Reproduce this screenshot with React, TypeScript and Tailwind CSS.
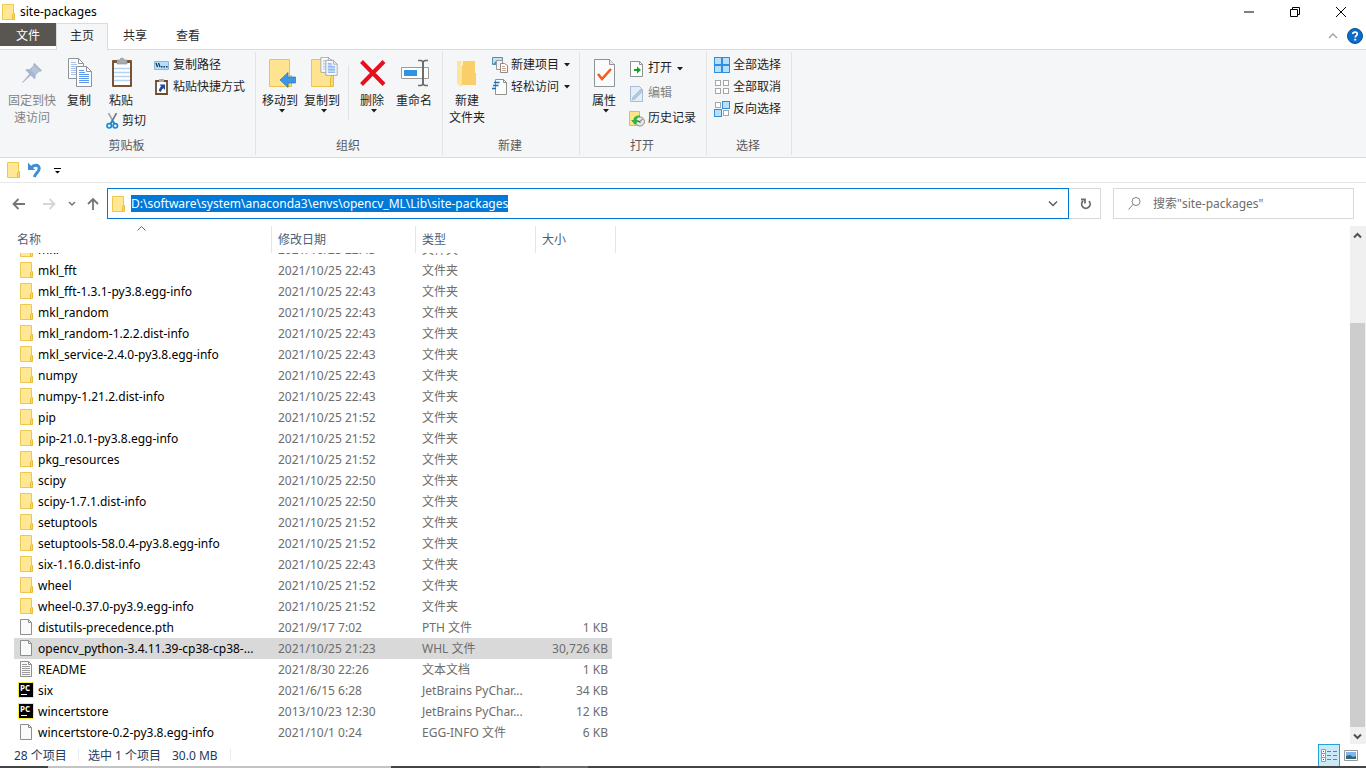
import React, { useEffect, useRef } from "react";

type FileRow = {
  name: string;
  date: string;
  type: string;
  size?: string;
  icon?: "folder" | "file" | "text" | "pycharm";
  selected?: boolean;
};

const FILES: FileRow[] = [
  { name: "mkl", date: "2021/10/25 22:43", type: "文件夹" },
  { name: "mkl_fft", date: "2021/10/25 22:43", type: "文件夹" },
  { name: "mkl_fft-1.3.1-py3.8.egg-info", date: "2021/10/25 22:43", type: "文件夹" },
  { name: "mkl_random", date: "2021/10/25 22:43", type: "文件夹" },
  { name: "mkl_random-1.2.2.dist-info", date: "2021/10/25 22:43", type: "文件夹" },
  { name: "mkl_service-2.4.0-py3.8.egg-info", date: "2021/10/25 22:43", type: "文件夹" },
  { name: "numpy", date: "2021/10/25 22:43", type: "文件夹" },
  { name: "numpy-1.21.2.dist-info", date: "2021/10/25 22:43", type: "文件夹" },
  { name: "pip", date: "2021/10/25 21:52", type: "文件夹" },
  { name: "pip-21.0.1-py3.8.egg-info", date: "2021/10/25 21:52", type: "文件夹" },
  { name: "pkg_resources", date: "2021/10/25 21:52", type: "文件夹" },
  { name: "scipy", date: "2021/10/25 22:50", type: "文件夹" },
  { name: "scipy-1.7.1.dist-info", date: "2021/10/25 22:50", type: "文件夹" },
  { name: "setuptools", date: "2021/10/25 21:52", type: "文件夹" },
  { name: "setuptools-58.0.4-py3.8.egg-info", date: "2021/10/25 21:52", type: "文件夹" },
  { name: "six-1.16.0.dist-info", date: "2021/10/25 22:43", type: "文件夹" },
  { name: "wheel", date: "2021/10/25 21:52", type: "文件夹" },
  { name: "wheel-0.37.0-py3.9.egg-info", date: "2021/10/25 21:52", type: "文件夹" },
  { name: "distutils-precedence.pth", date: "2021/9/17 7:02", type: "PTH 文件", size: "1 KB", icon: "file" },
  {
    name: "opencv_python-3.4.11.39-cp38-cp38-...",
    date: "2021/10/25 21:23",
    type: "WHL 文件",
    size: "30,726 KB",
    icon: "file",
    selected: true,
  },
  { name: "README", date: "2021/8/30 22:26", type: "文本文档", size: "1 KB", icon: "text" },
  { name: "six", date: "2021/6/15 6:28", type: "JetBrains PyChar...", size: "34 KB", icon: "pycharm" },
  { name: "wincertstore", date: "2013/10/23 12:30", type: "JetBrains PyChar...", size: "12 KB", icon: "pycharm" },
  { name: "wincertstore-0.2-py3.8.egg-info", date: "2021/10/1 0:24", type: "EGG-INFO 文件", size: "6 KB", icon: "file" },
];

/* ---------- small icons (16px) ---------- */

function FolderIcon() {
  return (
    <svg width="16" height="16" viewBox="0 0 16 16" className="shrink-0">
      <path d="M2.5.5h11v15h-11z" fill="#ffe794" stroke="#ecc850" />
      <path d="M12.5 10.500l1-1h1v6h-2z" fill="#fdd868" stroke="#e8bd3c" />
    </svg>
  );
}

function FileIcon({ lines = false }: { lines?: boolean }) {
  return (
    <svg width="16" height="16" viewBox="0 0 16 16" className="shrink-0">
      <path d="M2.500.5h8l3 3v12h-11z" fill="#f9fbfb" stroke="#8e8e8e" />
      <path d="M10.500.5v3h3" fill="none" stroke="#8e8e8e" />
      {lines && <path d="M4 3.500h5M4 5.500h8M4 7.500h8M4 9.500h8M4 11.500h8M4 13.500h8" stroke="#9a9a9a" />}
    </svg>
  );
}

function PyCharmIcon() {
  return (
    <svg width="16" height="16" viewBox="0 0 16 16" className="shrink-0">
      <path d="M0 0h16v16H0z" fill="#f6f03a" />
      <path d="M1 1h14v14H1z" fill="#000" />
      <text x="2" y="9" fontSize="8" fontWeight="700" fontFamily="Open Sans, sans-serif" fill="#fff">
        PC
      </text>
      <path d="M3 12h6v1H3z" fill="#fff" />
    </svg>
  );
}

function CutIcon() {
  return (
    <svg width="13" height="16" viewBox="0 0 13 16" className="shrink-0">
      <path d="M2.500 0 8.500 11" stroke="#a4a9ae" strokeWidth="1.700" fill="none" />
      <path d="M10.500 0 4.500 11" stroke="#757b82" strokeWidth="1.700" fill="none" />
      <path d="M4.500 10.500 6.500 8l2 2.500" stroke="#1a8ad0" strokeWidth="1.600" fill="none" />
      <circle cx="3.200" cy="12.800" r="2.200" fill="none" stroke="#1a8ad0" strokeWidth="1.700" />
      <circle cx="9.300" cy="12.800" r="2.200" fill="none" stroke="#1a8ad0" strokeWidth="1.700" />
    </svg>
  );
}

function CopyPathIcon() {
  return (
    <svg width="16" height="16" viewBox="0 0 16 16" className="shrink-0">
      <path d="M.5 4.500h14v8H.5z" fill="#b5dcfa" stroke="#86b9e0" />
      <path d="m2 6 1.500 4M4.500 6l1.500 4" stroke="#17375e" strokeWidth="1.300" />
      <path d="M7 9h1.500v1.500H7zM9.500 9H11v1.500H9.500zM12 9h1.500v1.500H12z" fill="#17375e" />
    </svg>
  );
}

function PasteShortcutIcon() {
  return (
    <svg width="16" height="16" viewBox="0 0 16 16" className="shrink-0">
      <path d="M2 2h11v13H2z" fill="#fff" stroke="#6b4a2f" strokeWidth="1.800" />
      <path d="M5 0h5v3H5z" fill="#a9a9a9" />
      <path d="M5.500 5.500H11V11L9.300 9.300C8 10.300 7.300 11.500 7 13L4.800 12c.2-1.800 1-3.300 2.300-4.700z" fill="#1f4f9c" />
    </svg>
  );
}

function NewItemIcon() {
  return (
    <svg width="16" height="16" viewBox="0 0 16 16" className="shrink-0">
      <path d="M.5 .5h10v7H.5z" fill="#bfe3f5" stroke="#5a8fa8" />
      <path d="m1 7 3-3 2 2 2-1 2 2z" fill="#4c91bd" />
      <path d="M4.500 3.500h6v9h-6z" fill="#f3f3f3" stroke="#9a9a9a" />
      <path d="M8.500 6.500h4l3 2v7h-7z" fill="#fff" stroke="#8b8b8b" />
      <path d="M10 9.500h3M10 11.500h4M10 13.500h4" stroke="#d7a58a" />
    </svg>
  );
}

function EasyAccessIcon() {
  return (
    <svg width="16" height="16" viewBox="0 0 16 16" className="shrink-0">
      <path d="M3.500.5h8l3 3v12h-11z" fill="#fbfcfc" stroke="#919191" />
      <path d="M11.500.5v3h3" fill="none" stroke="#919191" />
      <path d="M2 3.500h5.500M1 6.500h5.500M0 9.500h4" stroke="#1b6fb8" strokeWidth="1.400" />
    </svg>
  );
}

function OpenIcon() {
  return (
    <svg width="16" height="16" viewBox="0 0 16 16" className="shrink-0">
      <path d="M1.500.5h9l3 3v12h-12z" fill="#fbfcfc" stroke="#919191" />
      <path d="M10.500.5v3h3" fill="none" stroke="#919191" />
      <path d="M5 8h3V5.500L12 9l-4 3.500V10H5z" fill="#16a02c" />
    </svg>
  );
}

function EditIcon() {
  return (
    <svg width="16" height="16" viewBox="0 0 16 16" className="shrink-0">
      <path d="M1.500.5h9l3 3v12h-12z" fill="#e4edf8" stroke="#a9bcd4" />
      <path d="m3 14 1-3 8-8 2 2-8 8z" fill="#b3c7e0" stroke="#9db3cf" strokeWidth=".6" />
    </svg>
  );
}

function HistoryIcon() {
  return (
    <svg width="16" height="16" viewBox="0 0 16 16" className="shrink-0">
      <path d="M.5.5h10v14H.5z" fill="#ffe48b" stroke="#e4bc45" />
      <circle cx="11" cy="10.500" r="4.500" fill="#e7e7e7" stroke="#8c8c8c" />
      <path d="M11 10.500 13.500 8M11 10.500V12M11 10.500H9" stroke="#555" />
      <path d="M11 4.500C6.500 4.200 4.500 6.500 4.500 9H2l4 5 4-5H7.500c0-1.800 1-3 3.500-3.200z" fill="#2fb344" />
    </svg>
  );
}

function SelectIcon({ on }: { on: boolean[] }) {
  const cells = [
    [0, 0],
    [8, 0],
    [0, 8],
    [8, 8],
  ];
  return (
    <svg width="16" height="16" viewBox="0 0 16 16" className="shrink-0">
      {cells.map(([x, y], i) =>
        on[i] ? (
          <rect key={i} x={x + 0.5} y={y + 0.5} width="7" height="7" fill="#b9e0fb" stroke="#2f8fdd" />
        ) : (
          <rect key={i} x={x + 1.5} y={y + 1.5} width="5" height="5" fill="#fff" stroke="#a6a6a6" />
        )
      )}
    </svg>
  );
}

/* ---------- large icons (32px) ---------- */

function PinIcon() {
  return (
    <svg width="32" height="32" viewBox="0 0 32 32">
      <path
        d="M18.500 6 26 13.500l-1.500 1.300-1.300-.4-3.700 3.700c.5 1.600.2 3.200-.8 4.200l-3.900-3.900L6.500 26 6 25.500l7.300-8.500-4-4c1-1 2.800-1.300 4.300-.8l4-3.700-.5-1.300z"
        fill="#a5b6ce"
      />
      <path d="m18.700 9 4.300 4.300-4 4-4.300-4.300z" fill="#b7c5d9" />
    </svg>
  );
}

function Pages({ ink = "#86b2f0" }: { ink?: string }) {
  return (
    <>
      <path d="M.5.5h10l5 5v15H.5z" fill="#fbfcfd" stroke="#8f9499" />
      <path d="M10.500.5v5h5" fill="none" stroke="#8f9499" />
      <path d="M3 4.500h5M3 6.500h6M3 8.500h10M3 10.500h10M3 12.500h10M3 14.500h10M3 16.500h10" stroke={ink} />
    </>
  );
}

function CopyIcon() {
  return (
    <svg width="32" height="32" viewBox="0 0 32 32">
      <g transform="translate(5 1)">
        <Pages ink="#a9c6ee" />
      </g>
      <g transform="translate(13 9)">
        <Pages ink="#5c96ee" />
      </g>
    </svg>
  );
}

function PasteIcon() {
  return (
    <svg width="32" height="32" viewBox="0 0 32 32">
      <rect x="7" y="3" width="20" height="27" rx="1" fill="#7a5335" />
      <path d="M9 6h16v22H9z" fill="#fff" />
      <path d="M9 11.500h16M9 15.500h16M9 19.500h16M9 23.500h16" stroke="#b5d4ef" strokeWidth="1.500" />
      <path d="M12 3h3a2 2 0 0 1 4 0h3v4H12z" fill="#a8abae" stroke="#898c90" strokeWidth=".6" />
    </svg>
  );
}

function BigFolder() {
  return (
    <>
      <path d="M5.500 2.500h20v27h-20z" fill="#ffe391" stroke="#eac650" />
      <path d="M24.500 20.500l2-2h1v11h-3z" fill="#fbd76c" stroke="#e5bc40" />
    </>
  );
}

function MoveToIcon() {
  return (
    <svg width="32" height="32" viewBox="0 0 32 32">
      <BigFolder />
      <path d="m16 23 8-7.500V20h7.500v6H24v4.500z" fill="#3b97e3" stroke="#2479c2" strokeWidth=".7" />
    </svg>
  );
}

function CopyToIcon() {
  return (
    <svg width="32" height="32" viewBox="0 0 32 32">
      <BigFolder />
      <g transform="translate(14.500 0) scale(.75)">
        <Pages ink="#a9c6ee" />
      </g>
      <g transform="translate(19.500 3) scale(.75)">
        <Pages ink="#5c96ee" />
      </g>
    </svg>
  );
}

function DeleteIcon() {
  return (
    <svg width="32" height="32" viewBox="0 0 32 32">
      <path d="M5.500 4.500 28 27.500M28 4.500 5.500 27.500" stroke="#e60f1c" strokeWidth="4" />
    </svg>
  );
}

function RenameIcon() {
  return (
    <svg width="32" height="32" viewBox="0 0 32 32">
      <path d="M3.500 10.500h27v11h-27z" fill="#fff" stroke="#9a9a9a" />
      <path d="M6 13h13v6H6z" fill="#2f93e3" />
      <path d="M25 4v24" stroke="#6d6d6d" strokeWidth="2" />
      <path d="M20 3.500h3l2 1 2-1h3M20 28.500h3l2-1 2 1h3" fill="none" stroke="#6d6d6d" strokeWidth="1.600" />
    </svg>
  );
}

function NewFolderIcon() {
  return (
    <svg width="32" height="32" viewBox="0 0 32 32">
      <path d="M11 4h13v12h1v12H11z" fill="#f8cf6b" />
      <path d="M6 4h6v3l-1 1v22L6 27z" fill="#ffe59b" />
      <path d="M11 4h1v4l-3 2z" fill="#fff3cc" />
    </svg>
  );
}

function PropertiesIcon() {
  return (
    <svg width="32" height="32" viewBox="0 0 32 32">
      <path d="M6.500 2.500h15l5 5v22h-20z" fill="#fafbfc" stroke="#8e9196" />
      <path d="M21.500 2.500v5h5" fill="#e7e9ec" stroke="#8e9196" />
      <path d="m10 17 4 5 9-10" fill="none" stroke="#f0601c" strokeWidth="2.600" />
    </svg>
  );
}

function Caret() {
  return (
    <svg width="6" height="4" viewBox="0 0 6 4" className="shrink-0">
      <path d="M0 0h6L3 3.500z" fill="#1e1e1e" />
    </svg>
  );
}

/* ---------- ribbon pieces ---------- */

type BigButtonProps = {
  icon: React.ReactNode;
  lines: string[];
  wide?: boolean;
  caret?: boolean;
  disabled?: boolean;
};

function BigButton({ icon, lines, wide, caret, disabled }: BigButtonProps) {
  return (
    <button
      disabled={disabled}
      className={`flex flex-col items-center pt-[7px] ${wide ? "w-[52px]" : "w-[42px]"} ${
        disabled ? "text-[#838383]" : ""
      }`}
    >
      {icon}
      <span className="mt-[3px] flex flex-col whitespace-nowrap leading-[17px]">
        {lines.map((line) => (
          <span key={line}>{line}</span>
        ))}
      </span>
      {caret && (
        <span className="pl-1">
          <Caret />
        </span>
      )}
    </button>
  );
}

type SmallButtonProps = {
  icon: React.ReactNode;
  label: string;
  caret?: boolean;
  disabled?: boolean;
  tall?: boolean;
};

function SmallButton({ icon, label, caret, disabled, tall }: SmallButtonProps) {
  return (
    <button
      disabled={disabled}
      className={`flex items-center gap-[3px] whitespace-nowrap ${tall ? "h-[25px]" : "h-[22px]"} ${
        disabled ? "text-[#838383]" : ""
      }`}
    >
      {icon}
      <span className="mr-[2px] pb-[2px]">{label}</span>
      {caret && <Caret />}
    </button>
  );
}

function RibbonGroup({ label, width, children }: { label: string; width: string; children: React.ReactNode }) {
  return (
    <section aria-label={label} className={`my-[2px] flex flex-col border-r border-[#e2e3e4] ${width}`}>
      <div className="-mt-[2px] flex flex-1">{children}</div>
      <div className="pb-px pr-[2px] text-center leading-[17px] text-[#5a5a5a]">{label}</div>
    </section>
  );
}

function Ribbon() {
  return (
    <div className="flex h-[108px] shrink-0 border-b border-[#dadbdc] bg-[#f5f6f7] text-[#1e1e1e]">
      <RibbonGroup label="剪贴板" width="w-[256px]">
        <div className="flex items-start pl-[6px]">
          <BigButton wide disabled icon={<PinIcon />} lines={["固定到快", "速访问"]} />
          <BigButton icon={<CopyIcon />} lines={["复制"]} />
          <div className="w-[54px]">
            <BigButton icon={<PasteIcon />} lines={["粘贴"]} />
            <div className="pl-[6px] pt-px">
              <SmallButton icon={<CutIcon />} label="剪切" />
            </div>
          </div>
          <div className="flex flex-col pt-1">
            <SmallButton icon={<CopyPathIcon />} label="复制路径" />
            <SmallButton icon={<PasteShortcutIcon />} label="粘贴快捷方式" />
          </div>
        </div>
      </RibbonGroup>

      <RibbonGroup label="组织" width="w-[187px]">
        <div className="flex items-start pl-[3px]">
          <BigButton caret icon={<MoveToIcon />} lines={["移动到"]} />
          <BigButton caret icon={<CopyToIcon />} lines={["复制到"]} />
          <div className="ml-[5px] mr-[2px] mt-[15px] h-[55px] w-px bg-[#e2e3e4]" />
          <BigButton caret icon={<DeleteIcon />} lines={["删除"]} />
          <BigButton icon={<RenameIcon />} lines={["重命名"]} />
        </div>
      </RibbonGroup>

      <RibbonGroup label="新建" width="w-[137px]">
        <div className="flex items-start pl-[3px]">
          <BigButton icon={<NewFolderIcon />} lines={["新建", "文件夹"]} />
          <div className="ml-1 flex flex-col pt-1">
            <SmallButton caret icon={<NewItemIcon />} label="新建项目" />
            <SmallButton caret icon={<EasyAccessIcon />} label="轻松访问" />
          </div>
        </div>
      </RibbonGroup>

      <RibbonGroup label="打开" width="w-[127px]">
        <div className="flex items-start pl-[3px]">
          <BigButton caret icon={<PropertiesIcon />} lines={["属性"]} />
          <div className="ml-1 flex flex-col pt-[6px]">
            <SmallButton tall caret icon={<OpenIcon />} label="打开" />
            <SmallButton tall disabled icon={<EditIcon />} label="编辑" />
            <SmallButton tall icon={<HistoryIcon />} label="历史记录" />
          </div>
        </div>
      </RibbonGroup>

      <RibbonGroup label="选择" width="w-[85px]">
        <div className="flex flex-col pl-[7px] pt-1">
          <SmallButton icon={<SelectIcon on={[true, true, true, true]} />} label="全部选择" />
          <SmallButton icon={<SelectIcon on={[false, false, false, false]} />} label="全部取消" />
          <SmallButton icon={<SelectIcon on={[false, true, true, false]} />} label="反向选择" />
        </div>
      </RibbonGroup>
    </div>
  );
}

/* ---------- window chrome ---------- */

function TitleBar() {
  return (
    <header className="flex h-[23px] shrink-0 items-center pr-[2px]">
      <FolderIcon />
      <h1 className="ml-1 flex-1 text-black">site-packages</h1>
      <button aria-label="最小化" className="flex h-[21px] w-[46px] items-center justify-center">
        <svg width="10" height="10" viewBox="0 0 10 10">
          <path d="M0 5h10" stroke="#000" />
        </svg>
      </button>
      <button aria-label="还原" className="flex h-[21px] w-[46px] items-center justify-center">
        <svg width="10" height="10" viewBox="0 0 10 10" fill="none" stroke="#000">
          <path d="M.5 2.500h7v7h-7zM2.500 2.500v-2h7v7h-2" />
        </svg>
      </button>
      <button aria-label="关闭" className="flex h-[21px] w-[46px] items-center justify-center">
        <svg width="10" height="10" viewBox="0 0 10 10">
          <path d="m0 0 10 10M10 0 0 10" stroke="#000" />
        </svg>
      </button>
    </header>
  );
}

function TabBar() {
  return (
    <nav className="flex h-[27px] shrink-0 border-b border-[#dadbdc] text-[#2b2b2b]">
      <button className="h-[23px] w-[56px] bg-[#595652] pt-px text-white">文件</button>
      <button className="z-10 -mb-px w-[52px] border border-b-0 border-[#dadbdc] bg-[#f5f6f7] pb-1">主页</button>
      <button className="ml-px w-[52px] pb-[2px]">共享</button>
      <button className="ml-px w-[52px] pb-[2px]">查看</button>
      <div className="flex flex-1 items-center justify-end gap-[9px] pr-[3px]">
        <button aria-label="折叠功能区">
          <svg width="10" height="6" viewBox="0 0 10 6">
            <path d="m1 5 4-4 4 4" fill="none" stroke="#a0a0a0" strokeWidth="1.300" />
          </svg>
        </button>
        <button aria-label="帮助">
          <svg width="16" height="16" viewBox="0 0 16 16">
            <circle cx="8" cy="8" r="7.500" fill="#0a6ccb" stroke="#0b4f8f" />
            <path
              d="M5.800 6C5.800 3.600 10.300 3.600 10.300 6c0 1.600-2.100 1.700-2.100 3.600"
              fill="none"
              stroke="#fff"
              strokeWidth="1.700"
            />
            <path d="M7.200 10.800h2v1.700h-2z" fill="#fff" />
          </svg>
        </button>
      </div>
    </nav>
  );
}

function QuickAccess() {
  return (
    <div className="flex h-[25px] shrink-0 items-center border-b border-[#e8e8e8] pl-[5px]">
      <FolderIcon />
      <button aria-label="撤消" className="ml-[6px]">
        <svg width="15" height="16" viewBox="0 0 15 16">
          <path d="M1 0.500V8h7.500L6 6z" fill="#3c8fd6" />
          <path
            d="M4 6C6.500 2.800 12.200 2 12.200 6.500c0 3.500-3.700 4.500-4.900 8.500"
            fill="none"
            stroke="#3c8fd6"
            strokeWidth="3"
          />
        </svg>
      </button>
      <button aria-label="自定义快速访问工具栏" className="ml-3 pt-[2px]">
        <svg width="7" height="6" viewBox="0 0 7 6">
          <path d="M0 0h7v1H0zM1 3h5L3.500 5.500z" fill="#000" />
        </svg>
      </button>
    </div>
  );
}

function AddressRow() {
  const pathRef = useRef<HTMLInputElement>(null);

  useEffect(() => {
    pathRef.current?.focus();
    pathRef.current?.select();
  }, []);

  return (
    <div className="flex h-[43px] shrink-0 pr-3 pt-[5px]">
      <div className="flex h-[31px] w-[107px] items-center pl-3 text-[#757575]">
        <button aria-label="后退">
          <svg width="14" height="12" viewBox="0 0 14 12" fill="none" stroke="currentColor" strokeWidth="1.800">
            <path d="M13 6H2M6.500 1 1.500 6l5 5" />
          </svg>
        </button>
        <button aria-label="前进" disabled className="ml-4 text-[#d6d6d6]">
          <svg width="14" height="12" viewBox="0 0 14 12" fill="none" stroke="currentColor" strokeWidth="1.800">
            <path d="M1 6h11M7.500 1l5 5-5 5" />
          </svg>
        </button>
        <button aria-label="最近浏览的位置" className="ml-3">
          <svg width="8" height="6" viewBox="0 0 8 6" fill="none" stroke="currentColor" strokeWidth="1.500">
            <path d="m1 1 3 3 3-3" />
          </svg>
        </button>
        <button aria-label="上移" className="ml-[10px]">
          <svg width="14" height="14" viewBox="0 0 14 14" fill="none" stroke="currentColor" strokeWidth="1.800">
            <path d="M7 13V2M2 7l5-5 5 5" />
          </svg>
        </button>
      </div>

      <div className="flex h-[31px] min-w-0 flex-1 items-center border border-[#0078d7] pl-[2px]">
        <FolderIcon />
        <input
          ref={pathRef}
          aria-label="地址"
          defaultValue="D:\software\system\anaconda3\envs\opencv_ML\Lib\site-packages"
          className="ml-[5px] min-w-0 flex-1 text-black outline-none selection:bg-[#0078d7fd] selection:text-white"
        />
        <button aria-label="以前的位置" className="px-[10px]">
          <svg width="10" height="6" viewBox="0 0 10 6" fill="none" stroke="#555" strokeWidth="1.300">
            <path d="m1 .5 4 4 4-4" />
          </svg>
        </button>
      </div>
      <button
        aria-label="刷新"
        className="flex h-[31px] w-8 items-center justify-center border border-l-0 border-[#d9d9d9] pl-[2px]"
      >
        <svg width="12" height="12" viewBox="0 0 12 12" fill="none" stroke="#6d6d6d" strokeWidth="1.800">
          <path d="M3 3a4.200 4.200 0 1 0 6 .2" />
          <path d="M1 1.500h4v4" />
        </svg>
      </button>

      <label className="ml-3 flex h-[31px] w-[241px] items-center border border-[#d9d9d9] pl-[14px]">
        <svg width="13" height="13" viewBox="0 0 13 13" fill="none" stroke="#868089">
          <circle cx="8" cy="4.500" r="4" />
          <path d="M5 7.500 .5 12.500" />
        </svg>
        <input
          type="search"
          aria-label="搜索"
          placeholder={'搜索"site-packages"'}
          className="ml-3 min-w-0 flex-1 outline-none placeholder:text-[#6d6d6d]"
        />
      </label>
    </div>
  );
}

/* ---------- file list ---------- */

function RowIcon({ icon }: { icon?: FileRow["icon"] }) {
  if (icon === "file") return <FileIcon />;
  if (icon === "text") return <FileIcon lines />;
  if (icon === "pycharm") return <PyCharmIcon />;
  return <FolderIcon />;
}

function FileTable() {
  return (
    <table className="flex min-h-0 flex-1 flex-col text-[#6d6d6d]">
      <thead className="block shrink-0 text-[#4c607a]">
        <tr className="flex h-[27px] leading-[27px]">
          <th className="relative w-[272px] border-r border-[#e5e5e5] pl-[17px] text-left font-normal">
            名称
            <svg width="9" height="6" viewBox="0 0 9 6" className="absolute left-[137px] top-0">
              <path d="m.5 4.500 4-4 4 4" fill="none" stroke="#666" />
            </svg>
          </th>
          <th className="w-[144px] border-r border-[#e5e5e5] pl-[6px] text-left font-normal">修改日期</th>
          <th className="w-[120px] border-r border-[#e5e5e5] pl-[6px] text-left font-normal">类型</th>
          <th className="w-[80px] border-r border-[#e5e5e5] pl-[6px] text-left font-normal">大小</th>
        </tr>
      </thead>
      <tbody className="flex min-h-0 flex-1 flex-col justify-end overflow-hidden pb-px pl-[14px]">
        {FILES.map((file) => (
          <tr
            key={file.name}
            className={`flex h-[21px] w-[598px] shrink-0 leading-[21px] ${file.selected ? "bg-[#d9d9d9]" : ""}`}
          >
            <td className="flex w-[258px] items-start gap-1 whitespace-nowrap pl-1 text-black">
              <span className="pt-[2px]">
                <RowIcon icon={file.icon} />
              </span>
              {file.name}
            </td>
            <td className="w-[144px] pl-[6px]">{file.date}</td>
            <td className="w-[120px] whitespace-nowrap pl-[6px]">{file.type}</td>
            <td className="w-[76px] pr-1 text-right">{file.size}</td>
          </tr>
        ))}
      </tbody>
    </table>
  );
}

function ScrollBar() {
  return (
    <div className="flex w-4 shrink-0 flex-col bg-[#f0f0f0]">
      <button aria-label="向上滚动" className="flex h-[17px] shrink-0 items-center justify-center pr-px pt-px">
        <svg width="9" height="7" viewBox="0 0 9 7">
          <path d="m1 5.500 3.500-3.500L8 5.500" fill="none" stroke="#505050" strokeWidth="2" />
        </svg>
      </button>
      <div className="flex-[80]" />
      <div className="mr-px flex-[404] bg-[#cdcdcd]" />
      <button aria-label="向下滚动" className="flex h-[17px] shrink-0 items-center justify-center pr-px pt-px">
        <svg width="9" height="7" viewBox="0 0 9 7">
          <path d="M1 1.500 4.500 5 8 1.500" fill="none" stroke="#505050" strokeWidth="2" />
        </svg>
      </button>
    </div>
  );
}

function StatusBar() {
  return (
    <footer className="flex h-[22px] shrink-0 items-center pl-[14px] pr-[7px] text-[#1e395b]">
      <span className="w-[64px]">28 个项目</span>
      <div className="h-3 w-px bg-[#ececec]" />
      <span className="ml-[9px] w-[84px]">选中 1 个项目</span>
      <span className="w-[58px]">30.0 MB</span>
      <div className="h-3 w-px bg-[#ececec]" />
      <div className="flex-1" />
      <button
        aria-label="详细信息"
        className="flex h-[22px] w-[22px] items-center justify-center border border-b-0 border-[#26a0da] bg-[#cbe8f6]"
      >
        <svg width="16" height="14" viewBox="0 0 16 14">
          <path d="M.5.5h4v4h-4zM.5 4.500h4v4h-4zM.5 8.500h4v4h-4z" fill="#fff" stroke="#999" />
          <path d="M6 2.500h4M12 2.500h4M6 6.500h4M12 6.500h4M6 10.500h4M12 10.500h4" stroke="#6d7f8c" />
          <path d="M2 2h1v1H2z" fill="#555" />
          <path d="M2 6h1v1H2z" fill="#2f77c9" />
          <path d="M2 10h1v1H2z" fill="#c22" />
        </svg>
      </button>
      <button aria-label="大图标" className="ml-1">
        <svg width="15" height="11" viewBox="0 0 15 11">
          <path d="M.5.5h13v10H.5z" fill="#fff" stroke="#999" />
          <path d="M2 2h10v7H2z" fill="#7fb6ee" />
          <path d="M2 6l4-1 3 2 3-1v3H2z" fill="#2d6a7a" />
        </svg>
      </button>
    </footer>
  );
}

export default function App() {
  return (
    <div className="flex h-screen flex-col overflow-hidden bg-white font-['Noto_Sans','Noto_Sans_CJK_SC',sans-serif] text-[12px] leading-[17px]">
      <TitleBar />
      <TabBar />
      <Ribbon />
      <QuickAccess />
      <AddressRow />
      <main className="flex min-h-0 flex-1">
        <FileTable />
        <ScrollBar />
      </main>
      <StatusBar />
      {/* top edge of the taskbar */}
      <div className="flex h-[2px] shrink-0 bg-[#444447]">
        <div className="ml-12 w-[343px] bg-[#c4c4c4]" />
        <div className="ml-[149px] w-12 bg-[#68686b]" />
      </div>
    </div>
  );
}
